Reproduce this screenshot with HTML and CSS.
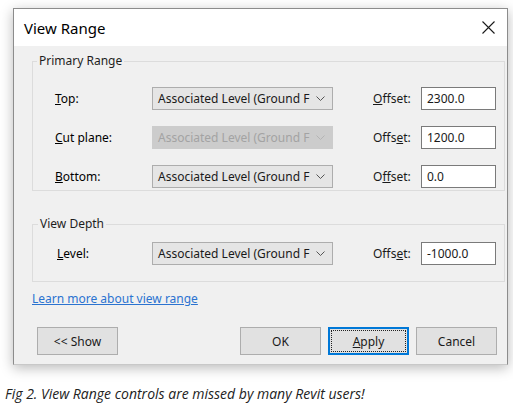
FILE: index.html
```html
<!DOCTYPE html>
<html>
<head>
<meta charset="utf-8">
<link rel="stylesheet" href="styles.css">
</head>
<body>
<div class="screen">
  <div class="dialog">
    <div class="titlebar">
      <span class="title">View Range</span>
      <svg class="close" width="13" height="13" viewBox="0 0 13 13"><path d="M0.5 0.5 L12.5 12.5 M12.5 0.5 L0.5 12.5" stroke="#1a1a1a" stroke-width="1.1" fill="none"/></svg>
    </div>
    <div class="body">
      <fieldset class="group g1">
        <legend>Primary Range</legend>
        <div class="row">
          <span class="lbl"><u>T</u>op:</span>
          <div class="combo"><span class="ctext">Associated Level (Ground F</span><svg class="chev" width="9" height="5" viewBox="0 0 9 5"><path d="M0.5 0.5 L4.5 4.5 L8.5 0.5" stroke="#555" stroke-width="1" fill="none"/></svg></div>
          <span class="olbl"><u>O</u>ffset:</span>
          <div class="input">2300.0</div>
        </div>
        <div class="row">
          <span class="lbl"><u>C</u>ut plane:</span>
          <div class="combo disabled"><span class="ctext">Associated Level (Ground F</span><svg class="chev" width="9" height="5" viewBox="0 0 9 5"><path d="M0.5 0.5 L4.5 4.5 L8.5 0.5" stroke="#b4b4b4" stroke-width="1" fill="none"/></svg></div>
          <span class="olbl">Offs<u>e</u>t:</span>
          <div class="input">1200.0</div>
        </div>
        <div class="row">
          <span class="lbl"><u>B</u>ottom:</span>
          <div class="combo"><span class="ctext">Associated Level (Ground F</span><svg class="chev" width="9" height="5" viewBox="0 0 9 5"><path d="M0.5 0.5 L4.5 4.5 L8.5 0.5" stroke="#555" stroke-width="1" fill="none"/></svg></div>
          <span class="olbl">O<u>f</u>fset:</span>
          <div class="input">0.0</div>
        </div>
      </fieldset>
      <fieldset class="group g2">
        <legend>View Depth</legend>
        <div class="row">
          <span class="lbl lvl"><u>L</u>evel:</span>
          <div class="combo"><span class="ctext">Associated Level (Ground F</span><svg class="chev" width="9" height="5" viewBox="0 0 9 5"><path d="M0.5 0.5 L4.5 4.5 L8.5 0.5" stroke="#555" stroke-width="1" fill="none"/></svg></div>
          <span class="olbl">Offs<u>e</u>t:</span>
          <div class="input">-1000.0</div>
        </div>
      </fieldset>
      <a class="link" href="#">Learn more about view range</a>
      <div class="buttons">
        <button class="btn">&lt;&lt; Show</button>
        <div class="spacer"></div>
        <button class="btn">OK</button>
        <button class="btn focus"><u>A</u>pply</button>
        <button class="btn">Cancel</button>
      </div>
    </div>
  </div>
  <p class="caption">Fig 2. View Range controls are missed by many Revit users!</p>
</div>
</body>
</html>
```

FILE: styles.css
```css
html, body {
  margin: 0;
  padding: 0;
  background: #ffffff;
}
.screen {
  width: 513px;
  height: 406px;
  overflow: hidden;
  padding: 8px 0 0 13px;
  box-sizing: border-box;
  font-family: "Noto Sans", "Open Sans", sans-serif;
  font-size: 12px;
  color: #000;
}
.dialog {
  width: 495px;
  box-sizing: border-box;
  border: 1px solid #8c8c8c;
  border-bottom-color: #c8c8c8;
  background: #f0f0f0;
  box-shadow: 0 3px 12px rgba(0, 0, 0, 0.28);
}
.titlebar {
  height: 37px;
  background: #ffffff;
  display: flex;
  align-items: center;
  justify-content: space-between;
  padding: 0 12px 0 10px;
}
.title {
  font-size: 15px;
  color: #000;
  line-height: 20px;
}
.close {
  display: block;
}
.body {
  display: flex;
  flex-direction: column;
  padding: 7px 2px 9px 18px;
}
.group {
  margin: 0;
  border: 1px solid #dcdcdc;
  padding: 18px 8px 2px 0;
  display: flex;
  flex-direction: column;
  gap: 16px;
}
.group legend {
  padding: 0 2px;
  margin-left: 4px;
  line-height: 16px;
  color: #1e1e1e;
}
.g2 {
  margin-top: 25px;
  padding-top: 10px;
  padding-bottom: 16px;
}
.g2 legend {
  margin-left: 5px;
}
.row {
  display: flex;
  align-items: center;
  height: 23px;
  padding-left: 22px;
}
.lbl {
  width: 97px;
}
.lvl {
  padding-left: 2px;
  width: 95px;
}
.combo {
  width: 181px;
  height: 23px;
  box-sizing: border-box;
  border: 1px solid #adadad;
  background: #e5e5e5;
  display: flex;
  align-items: center;
  padding: 0 7px 0 5px;
}
.combo.disabled {
  background: #cccccc;
  border-color: #cccccc;
  color: #a0a0a0;
}
.ctext {
  flex: 1;
  white-space: nowrap;
  color: #1a1a1a;
}
.disabled .ctext {
  color: #a3a3a3;
}
.chev {
  display: block;
  margin-left: 6px;
}
.olbl {
  margin-left: 40px;
  width: 48px;
  color: #1a1a1a;
}
.input {
  width: 75px;
  height: 23px;
  box-sizing: border-box;
  border: 1px solid #7a7a7a;
  background: #ffffff;
  padding-left: 5px;
  line-height: 21px;
  color: #1a1a1a;
}
.link {
  margin-top: 9px;
  line-height: 16px;
  color: #2b73d0;
  text-decoration: underline;
  align-self: flex-start;
}
.buttons {
  display: flex;
  gap: 7px;
  margin-top: 20px;
  padding-left: 5px;
  padding-right: 8px;
}
.spacer {
  flex: 1;
}
.btn {
  width: 81px;
  height: 28px;
  box-sizing: border-box;
  border: 1px solid #adadad;
  background: #e1e1e1;
  font-family: "Noto Sans", "Open Sans", sans-serif;
  font-size: 12px;
  color: #1a1a1a;
  padding: 0;
}
.btn.focus {
  border: 2px solid #0078d7;
  outline: 1px dotted #222;
  outline-offset: -4px;
}
.caption {
  margin: 20px 0 0 -8px;
  font-family: "Open Sans", "Noto Sans", sans-serif;
  font-style: italic;
  font-size: 14px;
  line-height: 18px;
  color: #222;
}
```
